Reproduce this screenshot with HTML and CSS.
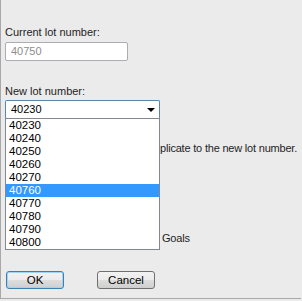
FILE: index.html
```html
<!DOCTYPE html>
<html lang="en">
<head>
    <meta charset="UTF-8">
    <title>Change lot number</title>
    <link rel="stylesheet" href="styles.css">
</head>
<body>
    <div class="dialog">
        <div class="field-label first">Current lot number:</div>
        <div class="text-box">40750</div>

        <div class="field-label second">New lot number:</div>
        <div class="combo">
            <div class="combo-box">
                <span>40230</span>
                <span class="arrow"></span>
            </div>
            <!-- open dropdown list lies over the options below -->
            <ul class="combo-list">
                <li>40230</li>
                <li>40240</li>
                <li>40250</li>
                <li>40260</li>
                <li>40270</li>
                <li class="selected">40760</li>
                <li>40770</li>
                <li>40780</li>
                <li>40790</li>
                <li>40800</li>
            </ul>
        </div>

        <!-- only the part right of the open list is visible -->
        <div class="option dup">plicate to the new lot number.</div>
        <div class="option goals">Goals</div>

        <div class="buttons">
            <button class="btn ok">OK</button>
            <button class="btn cancel">Cancel</button>
        </div>
    </div>
</body>
</html>
```

FILE: styles.css
```css
/* dialog basics */
body {
    margin: 0;
    background: #ebebeb;
    font-family: 'Liberation Sans', Arial, sans-serif;
    font-size: 11px;
    color: #1e1e1e;
}

.dialog {
    width: 301px;
    height: 299px;
    border-left: 1px solid #a8a8a8;
    border-bottom: 1px solid #a8a8a8;
    padding-left: 4px;
    box-sizing: border-box;
    position: relative;
    overflow: hidden;
}

.field-label {
    line-height: 14px;
}
.field-label.first { padding-top: 25px; }
.field-label.second { margin-top: 23px; }

/* read-only text box */
.text-box {
    margin-top: 3px;
    width: 123px;
    height: 19px;
    box-sizing: border-box;
    border: 1px solid #abadb3;
    border-radius: 2px;
    background: #fff;
    color: #8d8d8d;
    padding-left: 5px;
    line-height: 17px;
}

/* combo box */
.combo {
    position: relative;
    margin-top: 2px;
}

.combo-box {
    width: 155px;
    height: 19px;
    box-sizing: border-box;
    border: 1px solid #5b86ac;
    border-bottom-color: #8aa3bb;
    border-radius: 2px;
    background: #fff;
    padding-left: 5px;
    line-height: 17px;
    color: #000;
    position: relative;
}

.arrow {
    position: absolute;
    right: 4px;
    top: 7px;
    border-left: 4px solid transparent;
    border-right: 4px solid transparent;
    border-top: 4px solid #000;
}

.combo-list {
    position: absolute;
    top: 18px;
    left: 0;
    width: 155px;
    margin: 0;
    padding: 0;
    list-style: none;
    box-sizing: border-box;
    border: 1px solid #828790;
    background: #fff;
    z-index: 5;
}

.combo-list li {
    height: 13px;
    line-height: 13px;
    padding-left: 3px;
    font-size: 11.5px;
    color: #000;
}

.combo-list li.selected {
    background: #3399ff;
    color: #fff;
}

/* options under the list */
.option {
    line-height: 14px;
    white-space: nowrap;
    letter-spacing: -0.2px;
}
.option.dup { margin-top: 22px; padding-left: 155px; }
.option.goals { margin-top: 76px; padding-left: 157px; }

/* buttons */
.buttons {
    margin-top: 26px;
    display: flex;
    gap: 33px;
    padding-left: 1px;
}

.btn {
    width: 58px;
    height: 18px;
    padding: 0;
    font-family: inherit;
    font-size: 11.5px;
    color: #000;
    border: 1px solid #707070;
    border-radius: 3px;
    background: linear-gradient(#f2f2f2 0%, #ebebeb 50%, #dddddd 51%, #cfcfcf 100%);
}

.btn.ok {
    border-color: #3c7fb1;
    box-shadow: inset 0 0 0 1px #9fd4f5;
}
```
